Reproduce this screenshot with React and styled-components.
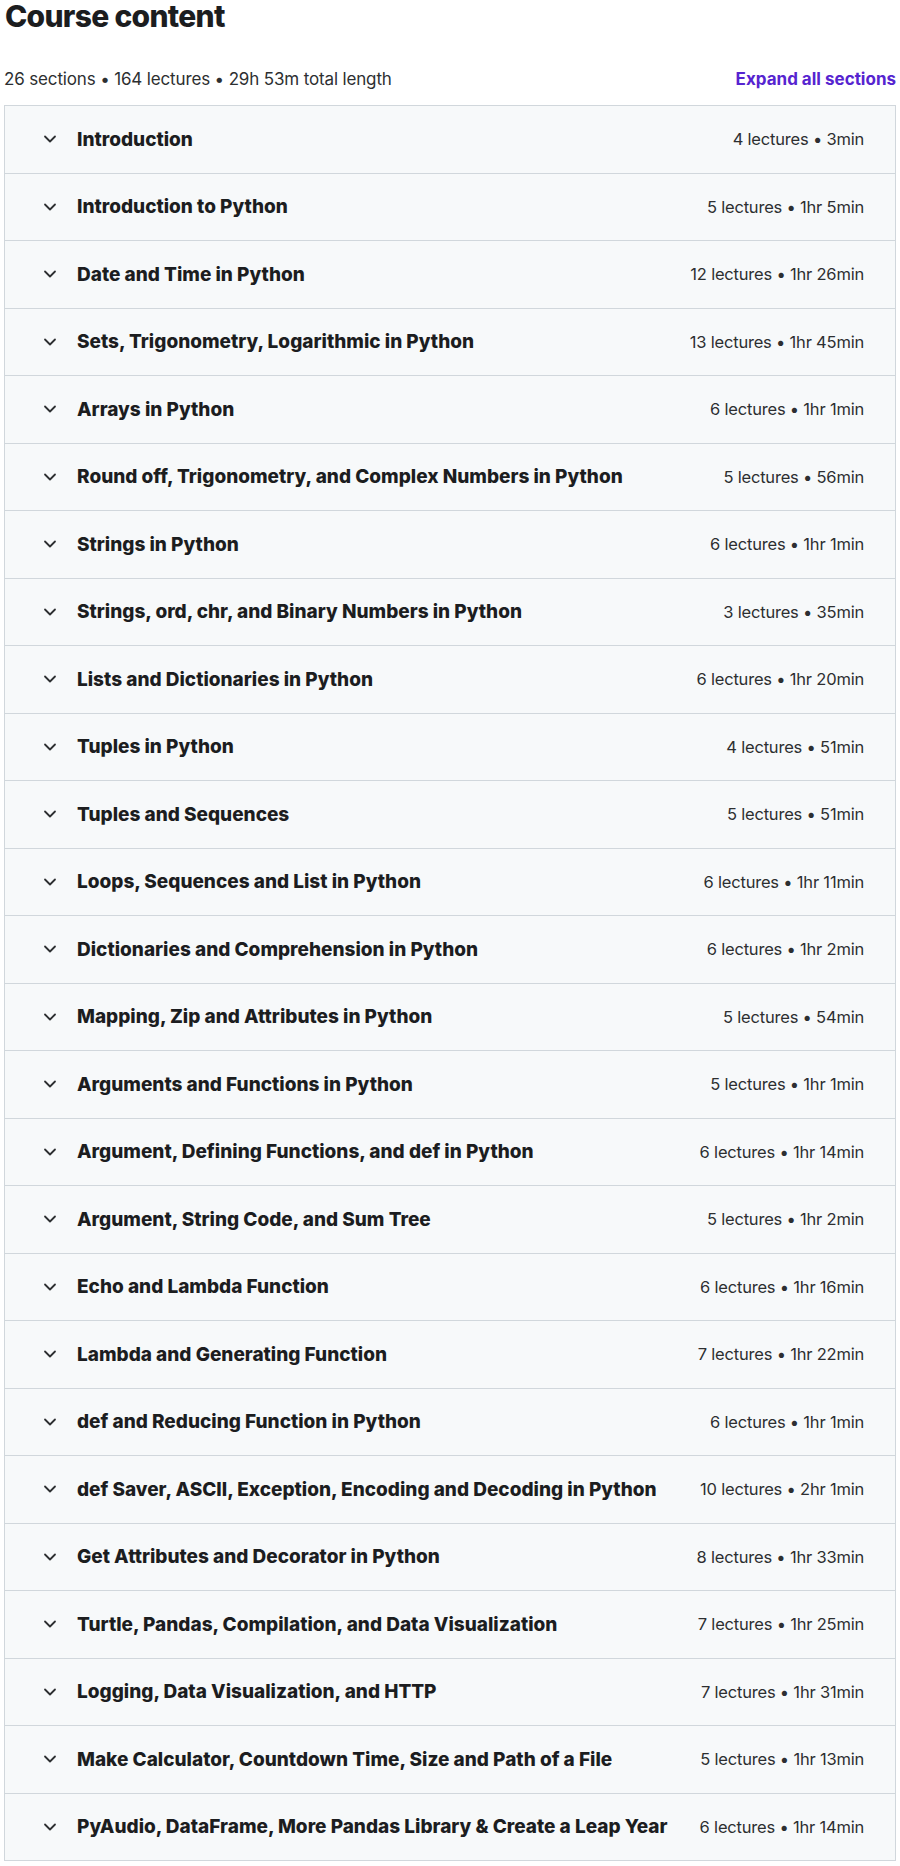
import React from 'react';
import styled, { createGlobalStyle } from 'styled-components';

const GlobalStyle = createGlobalStyle`
  body {
    margin: 0;
    background: #ffffff;
    color: #2d2f31;
    font-family: Inter, "Noto Sans", Arial, sans-serif;
  }
`;

const Page = styled.div`
  width: 900px;
  padding: 0 4px;
  box-sizing: border-box;
`;

const Title = styled.h2`
  margin: 0;
  padding-left: 1px;
  font-size: 30px;
  line-height: 32px;
  font-weight: 800;
  letter-spacing: -0.7px;
  color: #1c1d1f;
`;

const Summary = styled.div`
  display: flex;
  justify-content: space-between;
  align-items: center;
  height: 40px;
  margin-top: 27px;
  margin-bottom: 6px;
  font-size: 17px;
  letter-spacing: -0.15px;
`;

const Link = styled.button`
  border: none;
  background: none;
  padding: 0;
  font-family: inherit;
  font-size: 17px;
  font-weight: 700;
  letter-spacing: 0;
  color: #5624d0;
  cursor: pointer;
`;

const Sections = styled.div`
  border: 1px solid #d1d7dc;
`;

const Row = styled.div`
  display: flex;
  align-items: center;
  height: 66.5px;
  padding: 0 31px 0 38px;
  background: #f7f9fa;
  & + & {
    border-top: 1px solid #d1d7dc;
  }
`;

const Chevron = styled.svg`
  width: 14px;
  height: 14px;
  flex-shrink: 0;
  margin-right: 20px;
`;

const Name = styled.span`
  flex: 1;
  font-size: 19px;
  font-weight: 800;
  letter-spacing: 0;
  color: #1c1d1f;
  white-space: nowrap;
`;

const Meta = styled.span`
  font-size: 16.5px;
  letter-spacing: -0.2px;
  white-space: nowrap;
  margin-left: 16px;
`;

const sections = [
  ['Introduction', '4 lectures • 3min'],
  ['Introduction to Python', '5 lectures • 1hr 5min'],
  ['Date and Time in Python', '12 lectures • 1hr 26min'],
  ['Sets, Trigonometry, Logarithmic in Python', '13 lectures • 1hr 45min'],
  ['Arrays in Python', '6 lectures • 1hr 1min'],
  ['Round off, Trigonometry, and Complex Numbers in Python', '5 lectures • 56min'],
  ['Strings in Python', '6 lectures • 1hr 1min'],
  ['Strings, ord, chr, and Binary Numbers in Python', '3 lectures • 35min'],
  ['Lists and Dictionaries in Python', '6 lectures • 1hr 20min'],
  ['Tuples in Python', '4 lectures • 51min'],
  ['Tuples and Sequences', '5 lectures • 51min'],
  ['Loops, Sequences and List in Python', '6 lectures • 1hr 11min'],
  ['Dictionaries and Comprehension in Python', '6 lectures • 1hr 2min'],
  ['Mapping, Zip and Attributes in Python', '5 lectures • 54min'],
  ['Arguments and Functions in Python', '5 lectures • 1hr 1min'],
  ['Argument, Defining Functions, and def in Python', '6 lectures • 1hr 14min'],
  ['Argument, String Code, and Sum Tree', '5 lectures • 1hr 2min'],
  ['Echo and Lambda Function', '6 lectures • 1hr 16min'],
  ['Lambda and Generating Function', '7 lectures • 1hr 22min'],
  ['def and Reducing Function in Python', '6 lectures • 1hr 1min'],
  ['def Saver, ASCII, Exception, Encoding and Decoding in Python', '10 lectures • 2hr 1min'],
  ['Get Attributes and Decorator in Python', '8 lectures • 1hr 33min'],
  ['Turtle, Pandas, Compilation, and Data Visualization', '7 lectures • 1hr 25min'],
  ['Logging, Data Visualization, and HTTP', '7 lectures • 1hr 31min'],
  ['Make Calculator, Countdown Time, Size and Path of a File', '5 lectures • 1hr 13min'],
  ['PyAudio, DataFrame, More Pandas Library & Create a Leap Year', '6 lectures • 1hr 14min'],
];

const App = () => (
  <Page>
    <GlobalStyle />
    <Title>Course content</Title>
    <Summary>
      <span>26 sections • 164 lectures • 29h 53m total length</span>
      <Link>Expand all sections</Link>
    </Summary>
    <Sections>
      {sections.map(([name, meta]) => (
        <Row key={name}>
          <Chevron viewBox="0 0 14 14" fill="none">
            <path d="M2 4.5 L7 9.5 L12 4.5" stroke="#2d2f31" strokeWidth="1.8" strokeLinecap="round" strokeLinejoin="round" />
          </Chevron>
          <Name>{name}</Name>
          <Meta>{meta}</Meta>
        </Row>
      ))}
    </Sections>
  </Page>
);

export default App;
